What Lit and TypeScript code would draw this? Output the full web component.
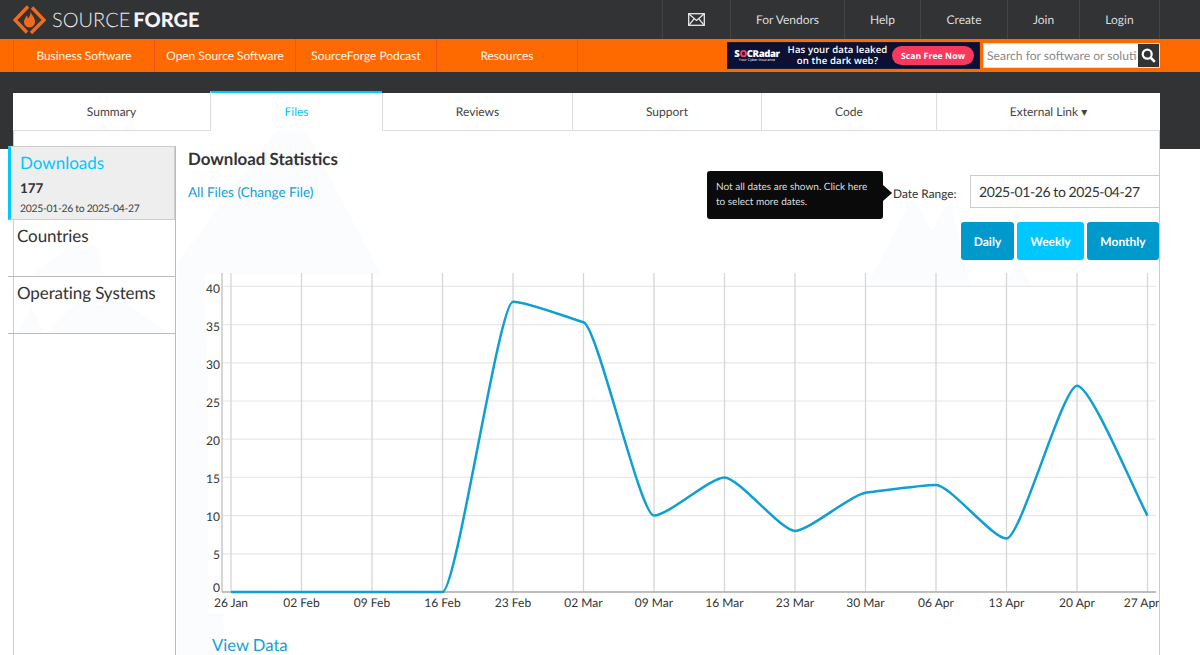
import { LitElement, html, css, svg } from "lit";
import { customElement } from "lit/decorators.js";

const data = [0, 0, 0, 0, 38, 35.3, 10, 15, 8, 13, 14, 7, 27, 10];
const labels = ["26 Jan", "02 Feb", "09 Feb", "16 Feb", "23 Feb", "02 Mar", "09 Mar", "16 Mar", "23 Mar", "30 Mar", "06 Apr", "13 Apr", "20 Apr", "27 Apr"];
const X0 = 43, STEP = 70.5, Y0 = 319, UNIT = 7.64;
const px = (i: number) => X0 + i * STEP;
const py = (v: number) => Y0 - v * UNIT;

function monotonePath(): string {
  const pts = data.map((v, i) => [px(i), py(v)]);
  const n = pts.length;
  const sl: number[] = [];
  for (let i = 0; i < n - 1; i++) sl.push((pts[i + 1][1] - pts[i][1]) / STEP);
  const t: number[] = [];
  for (let i = 0; i < n; i++) {
    if (i === 0) t.push(0);
    else if (i === n - 1) t.push(sl[n - 2]);
    else if (sl[i - 1] * sl[i] <= 0) t.push(0);
    else {
      const a = sl[i - 1], b = sl[i];
      t.push(Math.sign(a) * Math.min(Math.abs(a), Math.abs(b)));
    }
  }
  let d = `M${pts[0][0]} ${pts[0][1]}`;
  for (let i = 0; i < n - 1; i++) {
    const h = STEP * 0.2;
    d += `C${pts[i][0] + h} ${pts[i][1] + t[i] * h} ${pts[i + 1][0] - h} ${pts[i + 1][1] - t[i + 1] * h} ${pts[i + 1][0]} ${pts[i + 1][1]}`;
  }
  return d;
}

@customElement("app-root")
export class AppRoot extends LitElement {
  static styles = css`
    :host {
      display: block;
      width: 1200px;
      height: 655px;
      overflow: hidden;
      font-family: Lato, "Liberation Sans", sans-serif;
      text-rendering: geometricPrecision;
      color: #333;
      background: linear-gradient(#323335 0 149px, #fff 149px);
    }
    .top { display: flex; height: 39px; justify-content: space-between; }
    .logo { display: flex; align-items: center; padding-left: 13px; gap: 6px; color: #fff; }
    .logo svg { display: block; }
    .word { font-size: 20px; font-weight: 300; color: #eee; }
    .word b { font-weight: 900; margin-left: 3px; color: #f4f4f4; }
    .tnav { display: flex; margin-right: 40px; border-right: 1px solid #444; }
    .tnav div {
      display: flex; align-items: center; justify-content: center; box-sizing: border-box;
      border-left: 1px solid #444; color: #ddd; font-size: 12px;
    }
    .orange {
      display: flex; height: 33px; background: #ff6a00; justify-content: space-between; align-items: center;
      padding: 0 40px 0 13px; box-sizing: border-box; width: 1200px;
    }
    .onav { display: flex; height: 100%; }
    .onav div {
      width: 140px; display: flex; align-items: center; justify-content: center;
      border-left: 1px solid #f6501e; color: #fff5ec; font-size: 11.900px;
    }
    .onav div:last-child { border-right: 1px solid #f6501e; }
    .oright { display: flex; align-items: center; gap: 3px; }
    .ad {
      width: 253px; height: 27px; background: #0c1033; border: 1px solid #1a1d3a; box-sizing: border-box;
      display: flex; align-items: center; color: #fff; font-family: "Open Sans", sans-serif; position: relative;
    }
    .soc { width: 56px; text-align: center; font-weight: 800; font-size: 9.600px; line-height: 9px; letter-spacing: -0.4px; padding-left: 2px; box-sizing: border-box; }
    .soc i { color: #ff3f62; font-style: normal; }
    .soc small { display: block; font-size: 3.500px; line-height: 5px; font-weight: 600; letter-spacing: 0; color: #ddd; }
    .adtext { width: 107px; text-align: center; font-size: 9.600px; font-weight: 600; line-height: 11px; padding-bottom: 1px; letter-spacing: 0.1px; }
    .scan {
      margin-left: 1px; width: 82px; height: 19px; border-radius: 10px; background: #f8385c;
      display: flex; align-items: center; justify-content: center; font-size: 8.600px; font-weight: 700; letter-spacing: 0.1px;
    }
    .search { display: flex; width: 177px; height: 25px; background: #fff; border: 1px solid #ffd9bf; box-sizing: border-box; }
    .search span {
      flex: 1; min-width: 0; overflow: hidden; white-space: nowrap; color: #888; font-size: 12.100px;
      line-height: 23px; padding-left: 3px; margin-right: 1px;
    }
    .search div { width: 21px; background: #323335; display: flex; align-items: center; justify-content: center; }
    .main { margin: 21px 40px 0 13px; }
    .tabs { display: flex; height: 38px; background: #fff; border-bottom: 1px solid #ddd; box-sizing: border-box; }
    .tabs div {
      display: flex; align-items: center; justify-content: center; box-sizing: border-box;
      border-left: 1px solid #ddd; font-size: 12px; color: #444; height: 38px; padding-bottom: 1px;
    }
    .tabs div:first-child { border-left: 0; }
    .tabs div.on {
      color: #00c8ff; height: 40px; margin-top: -2px; border-top: 2px solid #00c8ff; background: #fff;
      position: relative; z-index: 1;
    }
    .panel {
      display: flex; position: relative; height: 525px; background: #fff;
      border-left: 1px solid #ccc; border-right: 1px solid #ccc;
    }
    .wm { position: absolute; left: -14px; top: -130px; width: 1200px; height: 655px; pointer-events: none; }
    .side {
      position: relative; width: 168px; margin: 15px 0 0 -6px; flex: none;
      border-right: 1px solid #bbb; box-sizing: border-box;
    }
    .sel {
      height: 74px; box-sizing: border-box; background: #eee; border: 1px solid #ccc; border-left: 3px solid #00c8ff;
      padding: 5px 0 0 9px;
    }
    .sel h3 { margin: 0; font-size: 17px; font-weight: 400; line-height: 22px; color: #00c8ff; }
    .sel b { display: block; font-size: 13.400px; line-height: 17px; margin-top: 6px; color: #333; }
    .sel small { display: block; font-size: 10.400px; line-height: 14px; margin-top: 5px; letter-spacing: -0.3px; color: #444; }
    .it { height: 57px; box-sizing: border-box; border-bottom: 1px solid #bbb; padding: 5px 0 0 9px; font-size: 17px; letter-spacing: -0.1px; line-height: 22px; color: #333; }
    .content { position: relative; flex: 1; min-width: 0; padding: 19px 0 0 12px; }
    .head { display: flex; justify-content: space-between; height: 111px; }
    h2 { margin: 0; font-size: 16.900px; font-weight: 700; line-height: 18px; color: #333; }
    .link { margin-top: 15px; font-size: 13.500px; line-height: 18px; color: #0ea1d6; }
    .right { display: flex; flex-direction: column; align-items: flex-end; padding-top: 21px; }
    .drow { display: flex; align-items: flex-start; height: 48px; }
    .tip {
      position: relative; width: 176px; height: 48px; box-sizing: border-box; background: #0a0a0a; border-radius: 3px;
      padding: 9px 0 0 9px; color: #ddd; font-size: 10px; line-height: 14.500px;
    }
    .tip::after {
      content: ""; position: absolute; left: 100%; top: 14px; border: 8px solid transparent; border-left-color: #0a0a0a;
      border-right: 0; border-left-width: 9px;
    }
    .dl { width: 77px; margin: 15px 0 0 10px; font-size: 11.900px; line-height: 16px; color: #333; }
    .inp {
      width: 189px; height: 33px; margin-top: 4px; box-sizing: border-box; border: 1px solid #ccc; border-right-width: 0;
      font-size: 14px; letter-spacing: -0.42px; line-height: 31px; padding-left: 8px; color: #333; background: #fff;
    }
    .btns { display: flex; gap: 3px; margin-top: 3px; }
    .btns div {
      height: 38px; border-radius: 3px; background: #0099cc; color: #fff; font-weight: 700; font-size: 12px;
      display: flex; align-items: center; justify-content: center;
    }
    .btns div.on { background: #00c8ff; }
    .chart { display: block; margin-top: 12px; position: relative; }
    .chart text { font-family: Lato, sans-serif; font-size: 12px; fill: #333; }
    .view { margin-top: 21px; padding-left: 24px; font-size: 16.600px; line-height: 22px; color: #0ea1d6; }
  `;

  chart() {
    const ys = [0, 5, 10, 15, 20, 25, 30, 35, 40];
    return html`<svg class="chart" width="971" height="340" viewBox="0 0 971 340">
      <rect x="20" y="13" width="951" height="327" fill="#fff"></rect>
      ${ys.slice(1).map((v) => svg`<line x1="34" x2="968" y1=${py(v)} y2=${py(v)} stroke="#e8e8e8" stroke-width="1.200"></line>`)}
      ${data.map((_, i) => svg`<line x1=${px(i)} x2=${px(i)} y1="0" y2=${Y0} stroke="#d6d6d6" stroke-width="1.300"></line>`)}
      <line x1="34" x2="34" y1="0" y2=${Y0} stroke="#bbb" stroke-width="1.200"></line>
      <line x1="34" x2="968" y1=${Y0} y2=${Y0} stroke="#aaa" stroke-width="1.600"></line>
      ${ys.map((v) => svg`<text x="32" y=${v === 0 ? 318.5 : 19.5 + ((40 - v) * 38) / 5} text-anchor="end">${v}</text>`)}
      ${labels.map((l, i) => svg`<text x=${px(i)} y="333.500" text-anchor=${i === 13 ? "end" : "middle"} dx=${i === 13 ? 12 : 0}>${l}</text>`)}
      <path d=${monotonePath()} fill="none" stroke="#0e9fd3" stroke-width="2.500" stroke-linejoin="round"></path>
    </svg>`;
  }

  render() {
    const tnav: [string, number][] = [["For Vendors", 114], ["Help", 76], ["Create", 87], ["Join", 72], ["Login", 80]];
    const tabs: [string, number, boolean][] = [["Summary", 197, false], ["Files", 172, true], ["Reviews", 190, false], ["Support", 189, false], ["Code", 175, false], ["External Link ▾", 224, false]];
    return html`
      <div class="top">
        <div class="logo">
          <svg width="33" height="30" viewBox="0 0 33 30">
            <path d="M15 1.500 2 15l12 12.500" fill="none" stroke="#f26b1d" stroke-width="3.400"></path>
            <path d="M19 2.500 31 15 18 28" fill="none" stroke="#f26b1d" stroke-width="3.400"></path>
            <path d="M17.500 6.500c.8 3.500 4.500 5.600 4.500 10.300 0 3.400-2.500 5.700-5.500 5.700s-5.500-2.300-5.500-5.400c0-3 1.800-4.400 2.800-6.600.8 1 1 2.200 1.100 3.300 1.500-1.800 2.900-4.300 2.600-7.300Z" fill="#f26b1d"></path>
          </svg>
          <span class="word">SOURCE<b>FORGE</b></span>
        </div>
        <div class="tnav">
          <div style="width:68px">
            <svg width="17" height="13" viewBox="0 0 17 13" fill="none" stroke="#e8e8e8" stroke-width="1.300">
              <rect x=".7" y=".7" width="15.600" height="11.600"></rect>
              <path d="M.7.700 8.500 7.500 16.300.7M.7 12.300 6.300 5.700M16.300 12.300 10.700 5.700"></path>
            </svg>
          </div>
          ${tnav.map(([t, w]) => html`<div style="width:${w}px">${t}</div>`)}
        </div>
      </div>
      <div class="orange">
        <div class="onav">
          <div>Business Software</div><div>Open Source Software</div><div>SourceForge Podcast</div><div>Resources</div>
        </div>
        <div class="oright">
          <div class="ad">
            <div class="soc">S<i>O</i>CRadar<small>Your Cyber Insurance</small></div>
            <div class="adtext">Has your data leaked<br />on the dark web?</div>
            <div class="scan">Scan Free Now</div>
          </div>
          <div class="search">
            <span>Search for software or solutions</span>
            <div>
              <svg width="15" height="15" viewBox="0 0 15 15" fill="none" stroke="#fff" stroke-width="2.200">
                <circle cx="6.200" cy="6.200" r="4.500"></circle><path d="m9.500 9.500 4.300 4.300" stroke-width="2.600"></path>
              </svg>
            </div>
          </div>
        </div>
      </div>
      <div class="main">
        <div class="tabs">
          ${tabs.map(([t, w, on]) => html`<div class=${on ? "on" : ""} style="width:${w}px">${t}</div>`)}
        </div>
        <div class="panel">
          <svg class="wm" viewBox="0 0 1200 655">
            <g fill="#fafcfe">
              <path d="M177 263 285 118 300 118 380 273 176 273Z"></path>
              <path d="M177 273H205L209 430 226 655H177Z"></path>
              <path d="M30 276 72 243 84 250 96 243 104 276Z"></path>
              <path d="M17 331 32 307 43 331ZM48 331 78 300 100 305 122 300 167 331Z"></path>
              <path d="M867 285 912 197 932 230 950 198 970 285ZM1003 285 1018 263 1032 285Z"></path>
              <path d="M97 129 103 120 109 129ZM124 129 130 120 137 129ZM664 129 670 121 676 129ZM846 129 851 122 856 129ZM857 129 861 122 866 129ZM1006 129 1011 122 1016 129ZM1030 129 1036 122 1042 129ZM1048 129 1056 120 1066 129Z"></path>
            </g>
          </svg>
          <div class="side">
            <div class="sel"><h3>Downloads</h3><b>177</b><small>2025-01-26 to 2025-04-27</small></div>
            <div class="it">Countries</div>
            <div class="it">Operating Systems</div>
          </div>
          <div class="content">
            <div class="head">
              <div>
                <h2>Download Statistics</h2>
                <div class="link">All Files (Change File)</div>
              </div>
              <div class="right">
                <div class="drow">
                  <div class="tip">Not all dates are shown. Click here<br />to select more dates.</div>
                  <div class="dl">Date Range:</div>
                  <div class="inp">2025-01-26 to 2025-04-27</div>
                </div>
                <div class="btns">
                  <div style="width:53px">Daily</div>
                  <div class="on" style="width:67px">Weekly</div>
                  <div style="width:72px">Monthly</div>
                </div>
              </div>
            </div>
            ${this.chart()}
            <div class="view">View Data</div>
          </div>
        </div>
      </div>
    `;
  }
}
